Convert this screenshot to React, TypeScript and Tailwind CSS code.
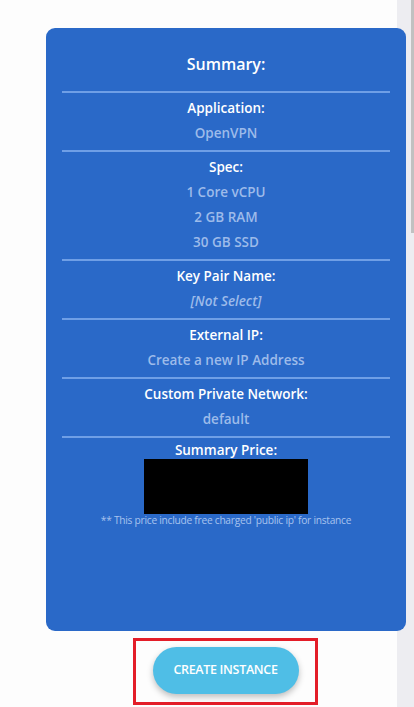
import React from 'react';

const sections = [
  { label: 'Application:', values: ['OpenVPN'] },
  { label: 'Spec:', values: ['1 Core vCPU', '2 GB RAM', '30 GB SSD'] },
  { label: 'Key Pair Name:', values: ['[Not Select]'], italic: true },
  { label: 'External IP:', values: ['Create a new IP Address'] },
  { label: 'Custom Private Network:', values: ['default'] },
];

export default function App() {
  return (
    <div
      className="relative min-h-[707px] w-[414px] overflow-hidden bg-[linear-gradient(to_right,#fdfdfd_397px,#ededf1_397px)]"
      style={{ fontFamily: '"Open Sans", "Liberation Sans", sans-serif' }}
    >
      {/* scrollbar thumb */}
      <div className="absolute right-0 top-0 h-[233px] w-[3px] bg-[#c1c1c1]" />

      <div className="pl-[46px] pt-[28px]">
        {/* Summary card */}
        <div className="flex h-[603px] w-[360px] flex-col rounded-[9px] bg-[#2a69c8] px-4 text-center">
          <div className="flex h-[63px] items-center justify-center pt-[8px] text-[16px] font-semibold text-white">
            Summary:
          </div>

          {sections.map((s) => (
            <div key={s.label} className="border-t-2 border-[#6f9fe6] pt-[3px] pb-[4px]">
              <div className="h-[25px] text-[13.5px] leading-[25px] font-semibold text-white">{s.label}</div>
              {s.values.map((v) => (
                <div
                  key={v}
                  className={`h-[25px] text-[13.5px] leading-[25px] font-semibold text-[#9dbbea] ${s.italic ? 'italic' : ''}`}
                >
                  {v}
                </div>
              ))}
            </div>
          ))}

          <div className="flex flex-col items-center border-t-2 border-[#6f9fe6] pt-[3px]">
            <div className="h-[18px] text-[13.5px] leading-[18px] font-semibold text-white">Summary Price:</div>
            <div className="h-[55px] w-[164px] bg-black" />
            <div className="text-[10.2px] leading-[12px] tracking-tight text-[#a8c3ee]">
              ** This price include free charged 'public ip' for instance
            </div>
          </div>
        </div>
      </div>

      {/* Create button */}
      <div className="ml-[133px] mt-[7px] flex h-[67px] w-[185px] items-center justify-center border-[3px] border-[#e31d28]">
        <button className="mb-[2px] h-[47px] w-[146px] rounded-full bg-[#4fbee6] text-[12.5px] font-semibold tracking-tight text-white shadow-[0_3px_6px_rgba(0,0,0,0.25)]">
          CREATE INSTANCE
        </button>
      </div>
    </div>
  );
}
